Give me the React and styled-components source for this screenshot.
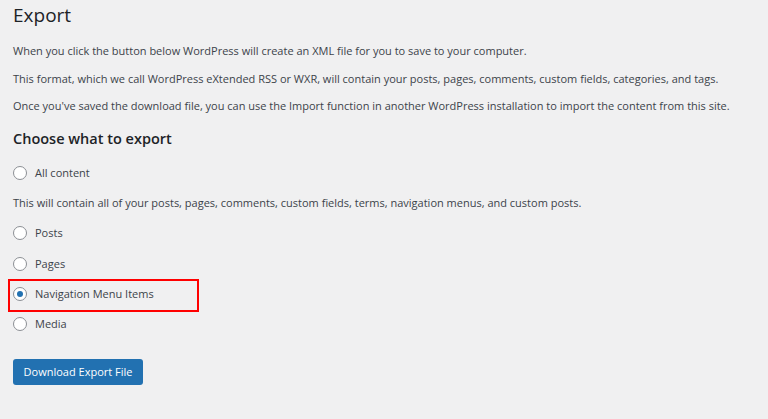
import React from 'react'
import styled, { createGlobalStyle } from 'styled-components'

const GlobalStyle = createGlobalStyle`
    html, body {
        margin: 0;
        padding: 0;
        background-color: #f0f0f1;
    }
    body {
        font-family: 'Open Sans', 'Noto Sans', sans-serif;
        color: #3c434a;
    }
`;

export default function App() {
    const options = [
        { id: 'all', label: 'All content', note: 'This will contain all of your posts, pages, comments, custom fields, terms, navigation menus, and custom posts.' },
        { id: 'posts', label: 'Posts' },
        { id: 'pages', label: 'Pages' },
        { id: 'nav_menu_item', label: 'Navigation Menu Items', checked: true, highlight: true },
        { id: 'attachment', label: 'Media' }
    ];

  return (
    <Wrapper>
        <GlobalStyle />
        <PageTitle>Export</PageTitle>
        <Intro>
            <Paragraph>When you click the button below WordPress will create an XML file for you to save to your computer.</Paragraph>
            <Paragraph>This format, which we call WordPress eXtended RSS or WXR, will contain your posts, pages, comments, custom fields, categories, and tags.</Paragraph>
            <Paragraph>Once you've saved the download file, you can use the Import function in another WordPress installation to import the content from this site.</Paragraph>
        </Intro>
        <SectionTitle>Choose what to export</SectionTitle>
        <OptionList>
            {options.map((option) => (
                <React.Fragment key={option.id}>
                    <OptionRow $highlight={option.highlight}>
                        <RadioCircle $checked={option.checked} />
                        <OptionLabel>{option.label}</OptionLabel>
                    </OptionRow>
                    {option.note && <OptionNote>{option.note}</OptionNote>}
                </React.Fragment>
            ))}
        </OptionList>
        <DownloadButton>Download Export File</DownloadButton>
    </Wrapper>
  )
}

const Wrapper = styled.div`
    display: flex;
    flex-direction: column;
    align-items: flex-start;
    padding: 1px 13px 0 13px;
    width: 768px;
    height: 419px;
    box-sizing: border-box;
`;

const PageTitle = styled.h1`
    margin: 0;
    font-size: 19px;
    line-height: 28px;
    font-weight: 400;
    color: #1d2327;
`;

const Intro = styled.div`
    display: flex;
    flex-direction: column;
    gap: 7.5px;
    margin-top: 12px;
`;

const Paragraph = styled.p`
    margin: 0;
    font-size: 11px;
    line-height: 20px;
    white-space: nowrap;
`;

const SectionTitle = styled.h2`
    margin: 11px 0 0 0;
    font-size: 14.5px;
    line-height: 24px;
    font-weight: 600;
    color: #1d2327;
`;

const OptionList = styled.div`
    display: flex;
    flex-direction: column;
    gap: 10.2px;
    margin-top: 12px;
`;

const OptionRow = styled.div`
    position: relative;
    display: flex;
    align-items: center;
    gap: 8px;
    height: 20px;

    ${({ $highlight }) => $highlight && `
        &::after {
            content: '';
            position: absolute;
            left: -5px;
            top: -5px;
            width: 187px;
            height: 29px;
            border: 2px solid #ff0000;
        }
    `}
`;

const RadioCircle = styled.span`
    display: flex;
    align-items: center;
    justify-content: center;
    width: 14px;
    height: 14px;
    box-sizing: border-box;
    border-radius: 50%;
    border: 1px solid #8c8f94;
    background-color: #ffffff;

    &::before {
        content: '';
        display: ${({ $checked }) => ($checked ? 'block' : 'none')};
        width: 6px;
        height: 6px;
        border-radius: 50%;
        background-color: #2271b1;
    }
`;

const OptionLabel = styled.span`
    font-size: 11px;
    line-height: 20px;
`;

const OptionNote = styled.p`
    margin: 0;
    font-size: 11px;
    line-height: 20px;
    white-space: nowrap;
`;

const DownloadButton = styled.button`
    margin-top: 25px;
    width: 130px;
    height: 26px;
    padding: 0;
    border: none;
    border-radius: 3px;
    background-color: #2271b1;
    color: #ffffff;
    font-family: 'Open Sans', 'Noto Sans', sans-serif;
    font-size: 11px;
    cursor: pointer;
`;
